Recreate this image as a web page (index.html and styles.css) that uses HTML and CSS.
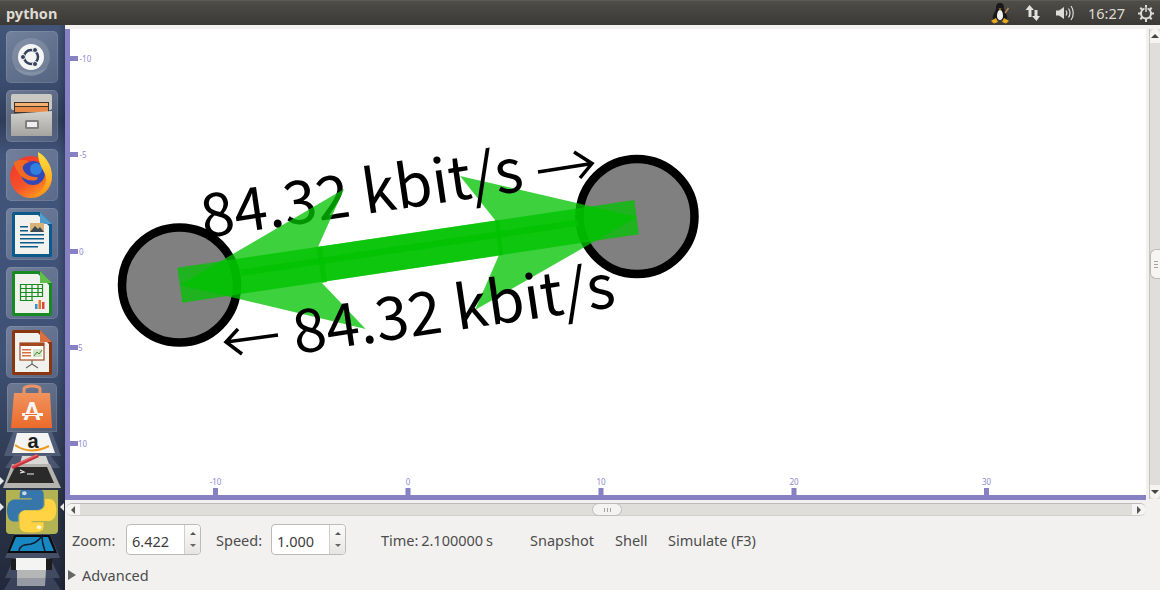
FILE: index.html
```html
<!DOCTYPE html>
<html lang="en">
<head>
<meta charset="utf-8">
<title>python</title>
<link rel="stylesheet" href="styles.css">
</head>
<body>
<header class="panel">
  <span class="panel-title">python</span>
  <div class="tray">
    <svg class="tray-tux" viewBox="0 0 20 22" width="20" height="22">
      <path d="M10 1c-3 0-4 2-4 5 0 3-3 6-3.500 10l3 2h9l3-2c-.5-4-3.500-7-3.500-10 0-3-1-5-4-5z" fill="#191919"/>
      <path d="M10 8c-2 0-3 3-3 6 0 2 1 4 3 4s3-2 3-4c0-3-1-6-3-6z" fill="#f2f2f2"/>
      <path d="M1 19l5-3 2 4-4 1.500zM19 19l-5-3-2 4 4 1.500z" fill="#e8a91c"/>
      <path d="M8.500 6.500h3l-1.500 1.500z" fill="#e8a91c"/>
      <path d="M15 11l3.500-5" stroke="#b9855a" stroke-width="1.500"/>
    </svg>
    <svg class="tray-net" viewBox="0 0 18 18" width="18" height="18">
      <path d="M5 1l4.500 5H7v7H4V6H1zM12 17l-4.500-5H10V6h3v6h2.500z" fill="#e4e2dd" transform="translate(.5 0)"/>
    </svg>
    <svg class="tray-sound" viewBox="0 0 22 18" width="22" height="18" fill="none">
      <path d="M1 6.500h3L9 3v12l-5-3.500H1z" fill="#dfddd8"/>
      <path d="M11 6.500c1 1.500 1 3.500 0 5M13.500 4.500c2 3 2 6 0 9M16 2c3 4 3 10 0 14" stroke="#dfddd8" stroke-width="1.200"/>
    </svg>
    <span class="tray-clock">16:27</span>
    <svg class="tray-gear" viewBox="0 0 18 18" width="18" height="18" fill="none" stroke="#dfddd8">
      <circle cx="9" cy="9.500" r="5" stroke-width="2"/>
      <path d="M9 1v3M9 15v3M1 9.500h3M14 9.500h3M3.300 3.800l2 2M12.700 13.200l2 2M14.700 3.800l-2 2M5.300 13.200l-2 2" stroke-width="2"/>
      <path d="M9 3v6" stroke="#3f3e3a" stroke-width="3"/>
      <path d="M9 3v5" stroke-width="1.500"/>
    </svg>
  </div>
</header>

<div class="desktop">
  <nav class="launcher">
    <div class="tile">
      <svg viewBox="0 0 52 52" width="52" height="52">
        <circle cx="25" cy="26" r="19" fill="#fff" opacity=".14"/>
        <path d="M8 35C14 47 34 48 42 36 32 43 16 43 8 35z" fill="#fff" opacity=".12"/>
        <circle cx="25" cy="26" r="13" fill="#f5f5f5"/>
        <circle cx="25" cy="26" r="7" fill="none" stroke="#35405c" stroke-width="2.500"/>
        <circle cx="17" cy="26" r="2.500" fill="#35405c" stroke="#f5f5f5"/>
        <circle cx="29" cy="19" r="2.500" fill="#35405c" stroke="#f5f5f5"/>
        <circle cx="29" cy="33" r="2.500" fill="#35405c" stroke="#f5f5f5"/>
      </svg>
    </div>
    <div class="tile">
      <svg viewBox="0 0 52 52" width="52" height="52">
        <defs>
          <linearGradient id="cab" x1="0" y1="0" x2="0" y2="1">
            <stop offset="0" stop-color="#d2d1cc"/>
            <stop offset="1" stop-color="#a5a4a0"/>
          </linearGradient>
        </defs>
        <rect x="5" y="4" width="41" height="16" rx="2" fill="#c9c8c3"/>
        <rect x="8" y="12" width="35" height="12" fill="#3e342c"/>
        <rect x="9" y="13" width="33" height="3" fill="#f4b070"/>
        <rect x="9" y="17" width="33" height="5" fill="#e88a48"/>
        <path d="M5 24L46 21V46H5z" fill="url(#cab)"/>
        <rect x="19" y="30" width="14" height="9" rx="1.500" fill="#7f7e7a"/>
        <rect x="21" y="32" width="10" height="5" fill="#efefef"/>
      </svg>
    </div>
    <div class="tile">
      <svg viewBox="0 0 52 52" width="52" height="52">
        <defs>
          <linearGradient id="fox" x1="0" y1="0" x2=".7" y2="1">
            <stop offset="0" stop-color="#f0302f"/>
            <stop offset=".6" stop-color="#f5512a"/>
            <stop offset="1" stop-color="#ff9a1f"/>
          </linearGradient>
          <linearGradient id="flame" x1="0" y1="0" x2="0" y2="1">
            <stop offset="0" stop-color="#ffe13d"/>
            <stop offset="1" stop-color="#ff9416"/>
          </linearGradient>
        </defs>
        <circle cx="25" cy="28" r="21" fill="url(#fox)"/>
        <circle cx="27" cy="24" r="12" fill="#3348b8"/>
        <circle cx="30" cy="20" r="6" fill="#2e7fe0"/>
        <path d="M32 3c6 3 14 12 14 24 0 12-9 20-20 20 8-3 14-9 14-17 0-8-8-12-8-27z" fill="url(#flame)"/>
        <path d="M8 13c5-3 12-3 15 0-5 1-7 4-6 7 1 4 6 8 12 8 3 0 4 2 1 3-7 2-15-2-18-8-2-3-4-6-4-10z" fill="#f26a21"/>
      </svg>
    </div>
    <div class="tile">
      <svg viewBox="0 0 52 52" width="52" height="52">
        <path d="M6 6a2 2 0 012-2h26l12 12v31a2 2 0 01-2 2H8a2 2 0 01-2-2z" fill="#0b5a8a"/>
        <path d="M9 7h23l11 11v28H9z" fill="#f1f1ee"/>
        <path d="M34 4l12 12H34z" fill="#4f9ccd"/>
        <rect x="24" y="15" width="14" height="9" fill="#d9b27a"/>
        <path d="M24 24l5-6 3 3 2-2 4 5z" fill="#3b4a55"/>
        <path d="M14 18h8v1.500h-8zM14 22h8v1.500h-8zM14 26h24v1.500H14zM14 30h24v1.500H14zM14 34h24v1.500H14zM14 38h18v1.500H14z" fill="#0b5a8a"/>
      </svg>
    </div>
    <div class="tile">
      <svg viewBox="0 0 52 52" width="52" height="52">
        <path d="M6 6a2 2 0 012-2h26l12 12v31a2 2 0 01-2 2H8a2 2 0 01-2-2z" fill="#178a22"/>
        <path d="M9 7h23l11 11v28H9z" fill="#f1f1ee"/>
        <path d="M34 4l12 12H34z" fill="#62bd4c"/>
        <path d="M14.500 17.500h22v16h-22zM14.500 21.500h22M14.500 25.500h22M14.500 29.500h22M20 17.500v16M26 17.500v16M32 17.500v16" fill="none" stroke="#178a22" stroke-width="1.200"/>
        <rect x="27" y="30" width="14" height="12" fill="#f1f1ee"/>
        <rect x="29" y="37" width="2.500" height="5" fill="#3b8ed0"/>
        <rect x="32.500" y="33" width="2.500" height="9" fill="#e8792a"/>
        <rect x="36" y="35" width="2.500" height="7" fill="#d94a3a"/>
      </svg>
    </div>
    <div class="tile">
      <svg viewBox="0 0 52 52" width="52" height="52">
        <path d="M6 6a2 2 0 012-2h26l12 12v31a2 2 0 01-2 2H8a2 2 0 01-2-2z" fill="#8a3610"/>
        <path d="M9 7h23l11 11v28H9z" fill="#f1f1ee"/>
        <path d="M34 4l12 12H34z" fill="#d8713f"/>
        <rect x="14" y="17" width="24" height="17" fill="#fff" stroke="#a24a1e" stroke-width="1.200"/>
        <rect x="14" y="17" width="24" height="3" fill="#a24a1e"/>
        <path d="M16 23h9v1.500h-9zM16 26h9v1.500h-9zM16 29h9v1.500h-9z" fill="#d8713f"/>
        <rect x="27" y="23" width="9" height="8" fill="#d5e4c4"/>
        <path d="M28 30l3-4 2 2 3-4" fill="none" stroke="#3d8f3d"/>
        <path d="M26 34v4M26 38l-6 4M26 38l6 4" stroke="#6a6a66" stroke-width="1.200"/>
      </svg>
    </div>
    <div class="tile tile-store">
      <svg viewBox="0 0 50 49" width="50" height="49">
        <defs>
          <linearGradient id="bag" x1="0" y1="0" x2="0" y2="1">
            <stop offset="0" stop-color="#f0935e"/>
            <stop offset="1" stop-color="#ec6a2a"/>
          </linearGradient>
        </defs>
        <path d="M17 10V6c0-4 16-4 16 0v4" fill="none" stroke="#e99468" stroke-width="3"/>
        <path d="M7 10h36l2 35H4z" fill="url(#bag)"/>
        <text class="store-a" x="25" y="37">A</text>
        <rect x="15" y="30" width="21" height="3" fill="#f6f6f6"/>
        <rect x="18" y="31" width="12" height="1" fill="#ec6a2a"/>
      </svg>
    </div>
    <svg class="stack" viewBox="0 432 65 58" width="65" height="58">
      <path d="M13 432H52L61 456H4z" fill="#7d8aa6" opacity=".4"/>
      <path d="M17 433H48L55 453H12z" fill="#f4f4f2"/>
      <text class="amazon-a" x="33" y="448">a</text>
      <path d="M15 445c10 7 22 7 34 1" fill="none" stroke="#ee9a1b" stroke-width="2"/>
      <path d="M5 468L14 455H50L60 468z" fill="#65718c" opacity=".5"/>
      <path d="M22 456h24l3 8H20z" fill="#d8d8d6"/>
      <path d="M3 488L12 464H50L61 488z" fill="#b4b3ae"/>
      <path d="M7 483L15 467H47L54 483z" fill="#2a2a2a"/>
      <path d="M20 470l4 2-4 1M27 474h7" fill="none" stroke="#eee" stroke-width="1.200"/>
      <path d="M11 466L37 454l2 3-26 12z" fill="#c9323a"/>
      <path d="M11 466L37 454l.7 1.300-26 12z" fill="#e76a6e"/>
    </svg>
    <svg class="tile-python" viewBox="0 490 65 44" width="65" height="44">
      <path d="M6 490H58V530a4 4 0 01-4 4H10a4 4 0 01-4-4z" fill="#b4b354"/>
      <g transform="translate(7 488) scale(.445 .4)">
        <path d="M54.900 0C50.300 0 46 .4 42.100 1.100 30.700 3.100 28.600 7.400 28.600 15.200V25.600H55.600V29H18.400C10.600 29 3.800 33.700 1.700 42.700-.8 53-.9 59.400 1.700 70.100 3.600 78.100 8.200 83.800 16 83.800H25.300V71.500C25.300 62.600 33 54.700 42.100 54.700H69C76.500 54.700 82.500 48.500 82.500 41V15.200C82.500 7.900 76.400 2.400 69 1.200 64.400.4 59.500 0 54.900 0z" fill="#3776ab"/>
        <path d="M54.900 0C50.300 0 46 .4 42.100 1.100 30.700 3.100 28.600 7.400 28.600 15.200V25.600H55.600V29H18.400C10.600 29 3.800 33.700 1.700 42.700-.8 53-.9 59.400 1.700 70.100 3.600 78.100 8.200 83.800 16 83.800H25.300V71.500C25.300 62.600 33 54.700 42.100 54.700H69C76.500 54.700 82.500 48.500 82.500 41V15.200C82.500 7.900 76.400 2.400 69 1.200 64.400.4 59.500 0 54.900 0z" fill="#ffd343" transform="rotate(180 55.400 55.600)"/>
        <circle cx="39" cy="13" r="5" fill="#cfdbe6"/>
        <circle cx="72" cy="98" r="5" fill="#fff8d8"/>
      </g>
    </svg>
    <svg class="stack" viewBox="0 534 65 56" width="65" height="56">
      <path d="M5 558L14 534H50L60 558z" fill="#65718c" opacity=".5"/>
      <path d="M7 553L14 535H50L57 553z" fill="#0c0c0c"/>
      <path d="M10 551L16 537H48L54 551z" fill="#1788c2"/>
      <path d="M19 551c1-7 7-6 12-7 4-1 8-4 11-8 0 5 1 10 3 15" fill="none" stroke="#0d1c30" stroke-width="1.500"/>
      <path d="M5 578L14 558H50L60 578z" fill="#65718c" opacity=".45"/>
      <rect x="16" y="558" width="30" height="12" fill="#f4f4f2"/>
      <rect x="11" y="559" width="5" height="11" fill="#1c1c1c"/>
      <rect x="46" y="559" width="6" height="11" fill="#1c1c1c"/>
      <path d="M17 570H46L45 586H17z" fill="#c9c9c6" opacity=".85"/>
      <path d="M4 590L11 578H53L61 590z" fill="#65718c" opacity=".35"/>
    </svg>
    <i class="pip pip-term"></i>
    <i class="pip pip-py"></i>
    <i class="pip-right"></i>
  </nav>

  <main class="main">
    <div class="view">
      <svg class="canvas" viewBox="65 25 1084 478" width="1084" height="478">
        <rect class="sheet" x="70" y="29" width="1076" height="466"/>
        <rect class="ruler" x="65" y="29" width="5" height="471"/>
        <rect class="ruler" x="65" y="495" width="1081" height="5"/>
        <rect class="ruler" x="70" y="56" width="8" height="5"/>
        <rect class="ruler" x="70" y="152" width="8" height="5"/>
        <rect class="ruler" x="70" y="249" width="8" height="5"/>
        <rect class="ruler" x="70" y="345" width="8" height="5"/>
        <rect class="ruler" x="70" y="441" width="8" height="5"/>
        <rect class="ruler" x="213" y="488" width="5" height="7"/>
        <rect class="ruler" x="405.500" y="488" width="5" height="7"/>
        <rect class="ruler" x="598.500" y="488" width="5" height="7"/>
        <rect class="ruler" x="791.500" y="488" width="5" height="7"/>
        <rect class="ruler" x="984" y="488" width="5" height="7"/>
        <text class="tick" x="79.500" y="62">-10</text>
        <text class="tick" x="79.500" y="158">-5</text>
        <text class="tick" x="79" y="255">0</text>
        <text class="tick" x="78" y="351">5</text>
        <text class="tick" x="78" y="447">10</text>
        <text class="tick tick-mid" x="215.500" y="485">-10</text>
        <text class="tick tick-mid" x="408" y="485">0</text>
        <text class="tick tick-mid" x="601" y="485">10</text>
        <text class="tick tick-mid" x="794" y="485">20</text>
        <text class="tick tick-mid" x="986.500" y="485">30</text>

        <circle class="node" cx="179.500" cy="285" r="57.500"/>
        <circle class="node" cx="637" cy="216.500" r="57.500"/>

        <!-- flow towards the right node: head, shaft -->
        <polygon class="flow" points="637,217 460,176 495,220 499,255 475,310"/>
        <polygon class="flow" points="177.300,267.700 182.300,302.700 503,255 499,220"/>

        <text class="rate" transform="translate(204 238) rotate(-8.430)">84.32 kbit/s</text>
        <path class="rate-arrow" d="M538 172L592 163.500M574 152L592 163.500L580 178"/>

        <!-- flow towards the left node: head, shaft, overlap along the middle -->
        <polygon class="flow" points="180,285 344,189 318,247 322,246.500 327,282 322,283 365.700,329"/>
        <polygon class="flow" points="316.700,247 634.300,200 639,234.300 321.700,282"/>
        <polygon class="flow" points="240.500,269.500 577.500,219.500 578.500,226 241.500,276"/>

        <text class="rate" transform="translate(296 354) rotate(-8.430)">84.32 kbit/s</text>
        <path class="rate-arrow" d="M278 335L226 342M238 329L226 342L242 354"/>
      </svg>
      <div class="vscroll">
        <div class="vstep vstep-up"><i class="tri tri-up"></i></div>
        <div class="vthumb"><i></i><i></i><i></i></div>
        <div class="vstep vstep-down"><i class="tri tri-down"></i></div>
      </div>
    </div>
    <div class="hscroll">
      <div class="hstep hstep-left"><i class="tri tri-left"></i></div>
      <div class="htrack">
        <div class="hthumb"><i></i><i></i><i></i></div>
      </div>
      <div class="hstep hstep-right"><i class="tri tri-right"></i></div>
    </div>
    <section class="controls">
      <div class="control-row">
        <label class="lbl lbl-zoom">Zoom:</label>
        <div class="spin"><span class="spin-value">6.422</span><div class="spin-btns"><i class="tri tri-up-sm"></i><i class="tri tri-down-sm"></i></div></div>
        <label class="lbl lbl-speed">Speed:</label>
        <div class="spin"><span class="spin-value">1.000</span><div class="spin-btns"><i class="tri tri-up-sm"></i><i class="tri tri-down-sm"></i></div></div>
        <span class="lbl lbl-time">Time: 2.100000 s</span>
        <span class="lbl lbl-snap">Snapshot</span>
        <span class="lbl lbl-shell">Shell</span>
        <span class="lbl">Simulate (F3)</span>
      </div>
      <div class="advanced"><i class="expander"></i><span class="lbl">Advanced</span></div>
    </section>
  </main>
</div>
</body>
</html>
```
FILE: styles.css
```css
* { box-sizing: border-box; }
html, body { margin: 0; padding: 0; }
body {
  width: 1160px;
  height: 590px;
  overflow: hidden;
  background: #f2f1f0;
  font-family: "Noto Sans", sans-serif;
  color: #4c4c4c;
}

/* top panel */
.panel {
  height: 25px;
  display: flex;
  align-items: center;
  justify-content: space-between;
  background: linear-gradient(#4e4d48, #3a3935);
  border-top: 1px solid #5b5a55;
}
.panel-title {
  margin-left: 6px;
  font-size: 14.500px;
  font-weight: 700;
  color: #dfdbd2;
}
.tray { display: flex; align-items: center; height: 24px; }
.tray-tux { margin-right: 14px; }
.tray-net { margin-right: 13px; }
.tray-sound { margin-right: 11px; }
.tray-clock { font-size: 14.500px; color: #dfdbd2; margin-right: 12px; }
.tray-gear { margin-right: 5px; }

.desktop { display: flex; height: 565px; }

/* launcher */
.launcher {
  position: relative;
  width: 65px;
  flex: none;
  padding-top: 6px;
  background:
    linear-gradient(90deg, rgba(0,0,0,0) 58px, rgba(0,0,0,.18) 65px),
    linear-gradient(#435679 0, #3a4c6e 60px, #2f3d5b 95px, #41547a 130px, #3f5176 330px, #2a3346 480px, #20263a 590px);
}
.tile {
  width: 52px;
  height: 52px;
  margin: 0 0 7px 6px;
  border-radius: 5px;
  background: linear-gradient(135deg, rgba(255,255,255,.26), rgba(255,255,255,.13));
  box-shadow: inset 0 0 0 1px rgba(255,255,255,.1);
}
.tile svg, .stack, .tile-python { display: block; }
.stack { overflow: visible; }
.tile-store {
  width: 50px;
  height: 49px;
  margin: -2px 0 0 7px;
  border-radius: 5px 5px 0 0;
}
.store-a {
  font-family: "Liberation Sans", sans-serif;
  font-size: 25px;
  font-weight: 700;
  fill: #f6f6f6;
  text-anchor: middle;
}
.amazon-a {
  font-family: "Liberation Sans", sans-serif;
  font-size: 20px;
  font-weight: 700;
  fill: #1c1c1c;
  text-anchor: middle;
}
.pip, .pip-right { position: absolute; width: 0; height: 0; border-style: solid; }
.pip { left: 0; border-width: 4px 0 4px 4px; border-color: transparent transparent transparent #e8e8e8; }
.pip-term { top: 452px; }
.pip-py { top: 478px; }
.pip-right { left: 60px; top: 478px; border-width: 4px 4px 4px 0; border-color: transparent #e8e8e8 transparent transparent; }

/* main window */
.main { width: 1095px; display: flex; flex-direction: column; }
.view { display: flex; height: 478px; }
.canvas { display: block; flex: none; }
.sheet { fill: #fff; }
.ruler { fill: #8681c3; }
.tick { font-family: "Noto Sans", sans-serif; font-size: 8px; fill: #8f8ad0; }
.tick-mid { text-anchor: middle; }
.node { fill: #808080; stroke: #000; stroke-width: 8.500px; }
.flow { fill: rgb(0, 195, 0); fill-opacity: .76; }
.rate { font-family: "Noto Sans CJK SC", "Noto Sans", sans-serif; font-size: 60px; fill: #000; }
.rate-arrow { fill: none; stroke: #000; stroke-width: 3.500px; }

/* vertical scrollbar */
.vscroll {
  width: 11px;
  margin-top: 4px;
  display: flex;
  flex-direction: column;
  background: #dfdedb;
  border-left: 1px solid #c4c2be;
  height: 470px;
}
.vstep {
  height: 14px;
  display: flex;
  align-items: center;
  justify-content: center;
  background: #f5f4f3;
}
.vstep-up { border-radius: 5px 5px 0 0; }
.vstep-down { margin-top: 206px; border-radius: 0 0 5px 5px; }
.vthumb {
  height: 30px;
  margin-top: 206px;
  display: flex;
  flex-direction: column;
  align-items: center;
  justify-content: center;
  gap: 2px;
  background: #f6f5f4;
  border: 1px solid #bdbbb7;
  border-right: 0;
  border-radius: 6px 0 0 6px;
}
.vthumb i { display: block; width: 4px; height: 1px; background: #a5a39f; }
.tri { display: block; width: 0; height: 0; border-style: solid; }
.tri-up { border-width: 0 4px 4px; border-color: transparent transparent #444; }
.tri-down { border-width: 4px 4px 0; border-color: #444 transparent transparent; }
.tri-left { border-width: 4px 4px 4px 0; border-color: transparent #555 transparent transparent; }
.tri-right { border-width: 4px 0 4px 4px; border-color: transparent transparent transparent #555; }

/* horizontal scrollbar */
.hscroll {
  display: flex;
  width: 1080px;
  height: 13px;
  margin-left: 1px;
  background: #dfdedb;
  border-radius: 6px;
  border-top: 1px solid #bdbbb7;
  border-bottom: 1px solid #d0cfcb;
}
.hstep {
  width: 14px;
  display: flex;
  align-items: center;
  justify-content: center;
  background: #f5f4f3;
}
.hstep-left { border-radius: 6px 0 0 6px; }
.hstep-right { border-radius: 0 6px 6px 0; }
.htrack { flex: 1; }
.hthumb {
  width: 30px;
  height: 13px;
  margin: -1px 0 0 512px;
  display: flex;
  align-items: center;
  justify-content: center;
  gap: 2px;
  background: #f4f3f2;
  border: 1px solid #bdbbb7;
  border-radius: 7px;
}
.hthumb i { display: block; width: 1px; height: 4px; background: #a5a39f; }

/* controls */
.controls { padding: 8px 0 0 7px; }
.control-row { display: flex; align-items: center; height: 31px; }
.lbl { font-size: 14.500px; white-space: nowrap; color: #4c4c4c; }
.lbl-zoom { width: 54px; }
.lbl-speed { width: 55px; margin-left: 15px; }
.lbl-time { width: 149px; margin-left: 35px; word-spacing: -1px; }
.lbl-snap { width: 85px; }
.lbl-shell { width: 53px; }
.spin {
  width: 75px;
  height: 31px;
  display: flex;
  background: #fff;
  border: 1px solid #bdbbb7;
  border-radius: 4px;
}
.spin-value { flex: 1; padding: 6px 0 0 5px; font-size: 14.500px; color: #3c3c3c; }
.spin-btns {
  width: 16px;
  display: flex;
  flex-direction: column;
  align-items: center;
  justify-content: center;
  gap: 9px;
  background: linear-gradient(#fafafa, #f2f1f0 50%, #e6e5e2);
  border-left: 1px solid #d0cfcb;
  border-radius: 0 4px 4px 0;
}
.tri-up-sm { border-width: 0 3.500px 3.500px; border-color: transparent transparent #555; }
.tri-down-sm { border-width: 3.500px 3.500px 0; border-color: #666 transparent transparent; }
.advanced { display: flex; align-items: center; height: 20px; margin: 10px 0 0 -4px; }
.expander {
  display: block;
  width: 0;
  height: 0;
  margin-right: 6px;
  border-style: solid;
  border-width: 5px 0 5px 8px;
  border-color: transparent transparent transparent #666;
}
```
